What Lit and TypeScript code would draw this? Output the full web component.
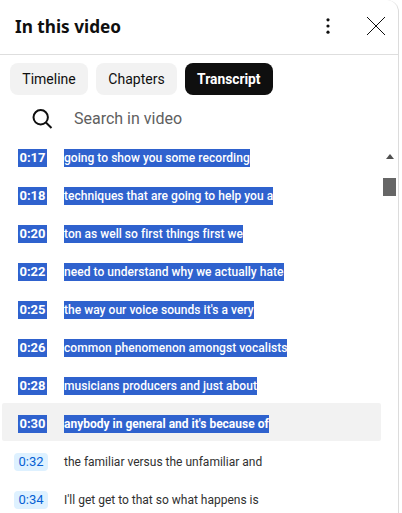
import { LitElement, html, css } from "lit";
import { customElement } from "lit/decorators.js";

const rows = [
  ["0:17", "going to show you some recording", 1, 0],
  ["0:18", "techniques that are going to help you a", 1, 0],
  ["0:20", "ton as well so first things first we", 1, 0],
  ["0:22", "need to understand why we actually hate", 1, 0],
  ["0:25", "the way our voice sounds it's a very", 1, 0],
  ["0:26", "common phenomenon amongst vocalists", 1, 0],
  ["0:28", "musicians producers and just about", 1, 0],
  ["0:30", "anybody in general and it's because of", 1, 1],
  ["0:32", "the familiar versus the unfamiliar and", 0, 0],
  ["0:34", "I'll get get to that so what happens is", 0, 0],
] as const;

@customElement("app-root")
export class AppRoot extends LitElement {
  static styles = css`
    :host {
      display: block;
      width: 402px;
      height: 513px;
      overflow: hidden;
      background: #fff;
      font-family: Roboto, "Liberation Sans", sans-serif;
      color: #0f0f0f;
    }
    .panel {
      box-sizing: border-box;
      width: 399px;
      height: 513px;
      border-right: 1px solid #dcdcdc;
      border-top-right-radius: 12px;
      display: flex;
      flex-direction: column;
      overflow: hidden;
    }
    .header {
      box-sizing: border-box;
      height: 55px;
      flex: none;
      border-bottom: 1px solid #dedede;
      display: flex;
      align-items: center;
      padding: 0 12px 1px 15px;
    }
    .title {
      flex: 1;
      font-family: "Noto Sans", Roboto, sans-serif;
      font-size: 17.2px;
      font-weight: 700;
    }
    .dots { margin: 0 36px 2px 0; display: block; }
    .close { display: block; margin-bottom: 2px; }
    .chips {
      display: flex;
      gap: 8px;
      padding: 8px 0 0 10px;
      flex: none;
    }
    .chip {
      box-sizing: border-box;
      height: 32px;
      border-radius: 8px;
      background: #f2f2f2;
      font-size: 14px;
      font-weight: 400;
      display: flex;
      align-items: center;
      padding: 0 12.3px;
    }
    .chip.on {
      background: #0f0f0f;
      color: #fff;
      font-size: 13.8px;
      font-weight: 700;
      padding: 0 12.2px;
    }
    .search {
      flex: none;
      display: flex;
      align-items: center;
      height: 38px;
      padding: 4px 0 0 31px;
      gap: 21px;
      font-size: 16px;
      color: #606060;
    }
    .search svg { display: block; }
    .list {
      position: relative;
      flex: 1;
      min-height: 0;
    }
    .row {
      box-sizing: border-box;
      width: 379px;
      height: 38px;
      margin-left: 2px;
      padding: 4px 0 0 12px;
      display: flex;
      align-items: center;
      font-size: 12px;
      color: #303030;
      border-radius: 2px;
    }
    .row.active { background: #f2f2f2; }
    .ts {
      box-sizing: border-box;
      width: 34px;
      height: 18px;
      line-height: 18px;
      text-align: center;
      flex: none;
      margin-right: 16px;
      border-radius: 4px;
      background: #def1ff;
      color: #065fd4;
      font-size: 13px;
    }
    .text { line-height: 18px; white-space: nowrap; }
    .sel .ts {
      width: 29px;
      margin: 0 17px 0 4px;
      border-radius: 0;
      background: #2f62ce;
      color: #fff;
      font-weight: 700;
    }
    .sel .text {
      background: #2f62ce;
      color: #fff;
      font-weight: 500;
      letter-spacing: 0.04px;
    }
    .active .text { font-weight: 700; letter-spacing: 0; }
    .bar {
      position: absolute;
      top: 0;
      right: 2px;
      width: 13px;
      height: 100%;
    }
    .arrow {
      position: absolute;
      top: 17px;
      left: 3px;
      width: 0;
      height: 0;
      border-left: 4px solid transparent;
      border-right: 4px solid transparent;
      border-bottom: 5px solid #505050;
    }
    .thumb {
      position: absolute;
      top: 41px;
      left: 0;
      width: 13px;
      height: 18px;
      background: #666;
    }
  `;

  render() {
    return html`
      <div class="panel">
        <div class="header">
          <div class="title">In this video</div>
          <svg class="dots" width="4" height="16" viewBox="0 0 4 16" fill="#0f0f0f">
            <circle cx="2" cy="1.8" r="1.6"></circle>
            <circle cx="2" cy="8" r="1.6"></circle>
            <circle cx="2" cy="14.2" r="1.6"></circle>
          </svg>
          <svg class="close" width="20" height="20" viewBox="0 0 20 20" fill="none" stroke="#0f0f0f" stroke-width="1">
            <path d="M1 1 L19 19 M19 1 L1 19"></path>
          </svg>
        </div>
        <div class="chips">
          <div class="chip">Timeline</div>
          <div class="chip">Chapters</div>
          <div class="chip on">Transcript</div>
        </div>
        <div class="search">
          <svg width="22" height="22" viewBox="0 0 22 22" fill="none" stroke="#0f0f0f" stroke-width="2">
            <circle cx="9.7" cy="10.3" r="7.2"></circle>
            <path d="M14.9 15.5 L20.5 21"></path>
          </svg>
          <span>Search in video</span>
        </div>
        <div class="list">
          ${rows.map(
            ([t, s, sel, active]) => html`
              <div class="row ${sel ? "sel" : ""} ${active ? "active" : ""}">
                <span class="ts">${t}</span>
                <span class="text">${s}</span>
              </div>
            `
          )}
          <div class="bar">
            <div class="arrow"></div>
            <div class="thumb"></div>
          </div>
        </div>
      </div>
    `;
  }
}
